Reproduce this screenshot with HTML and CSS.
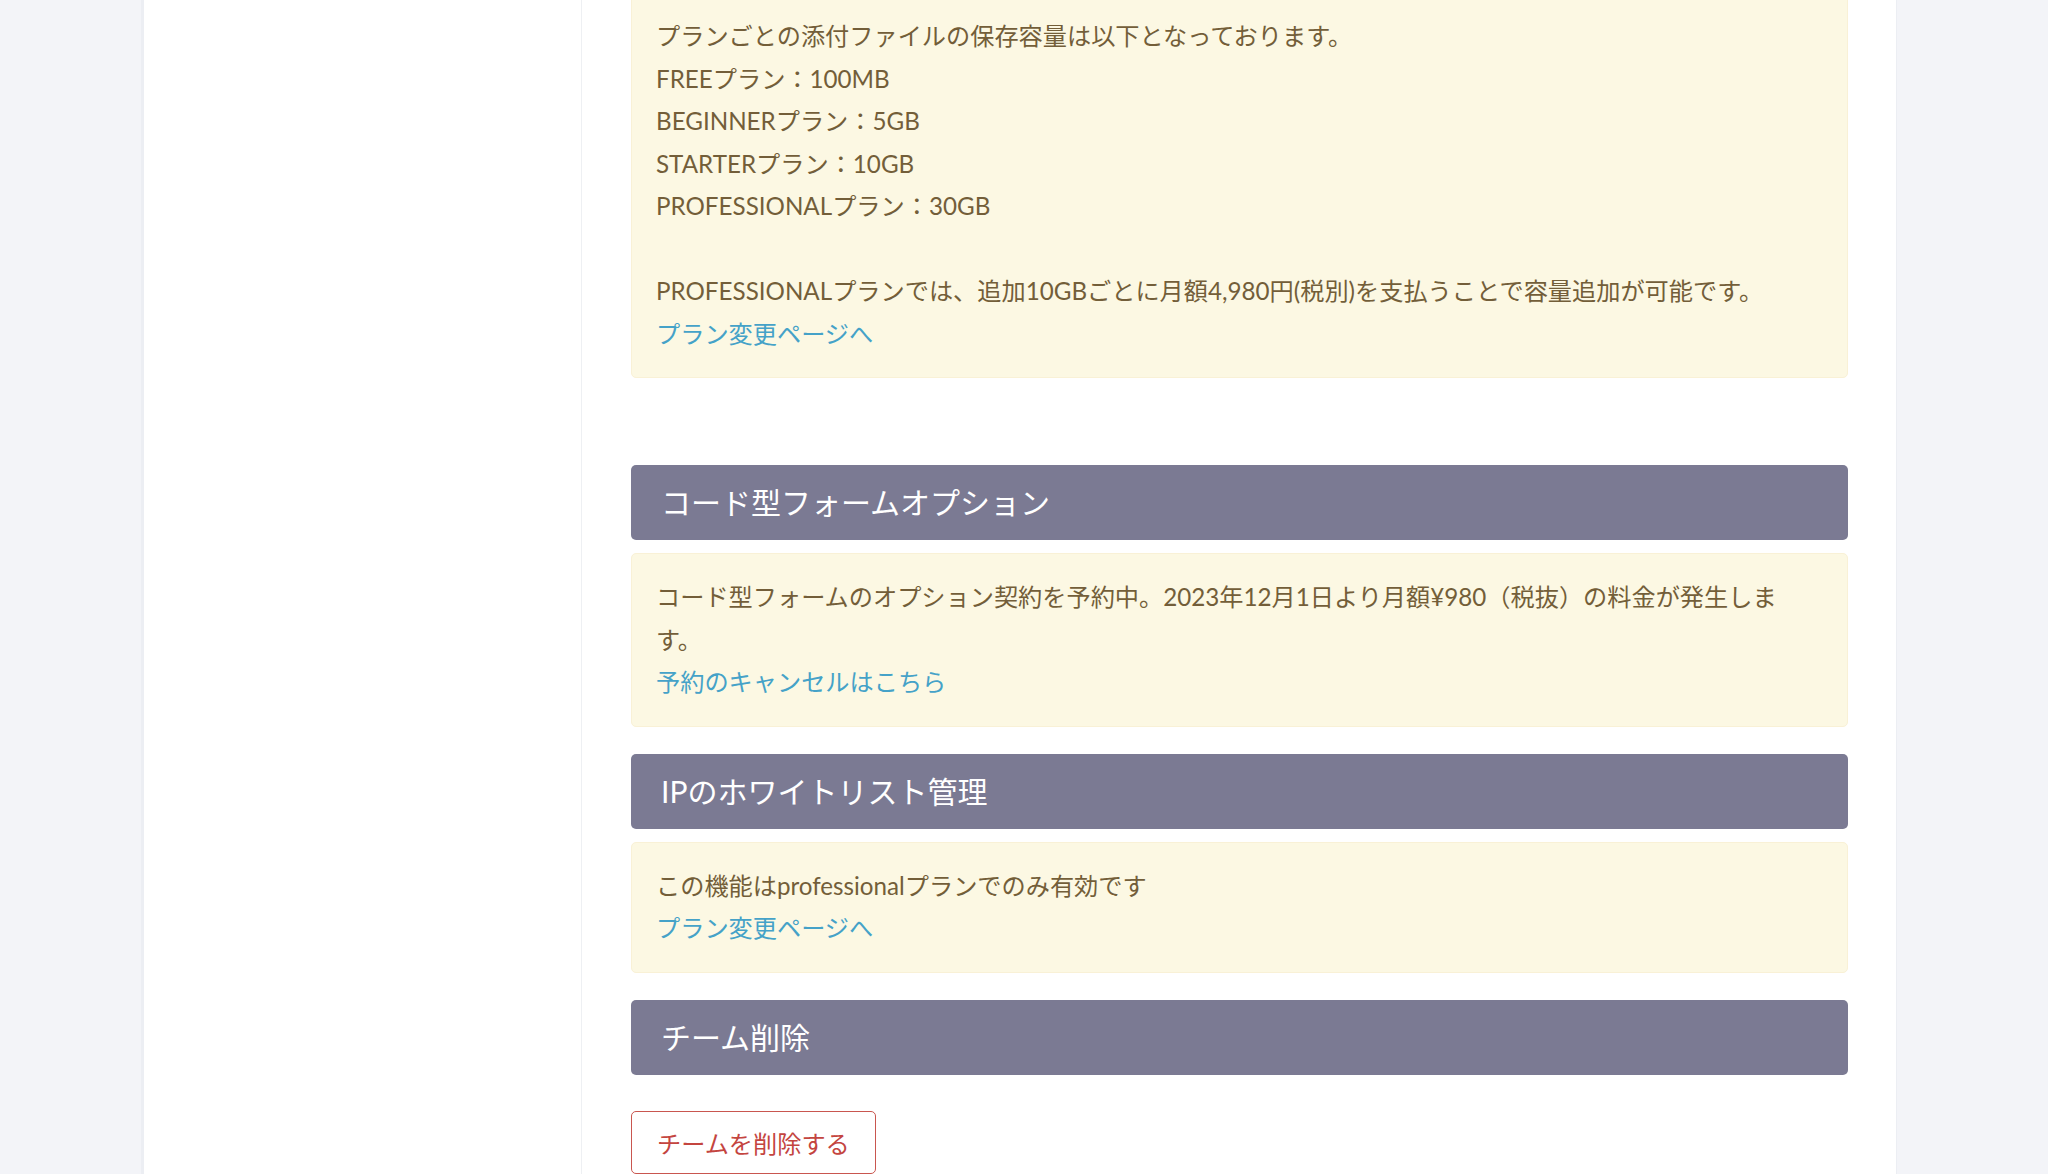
FILE: index.html
```html
<!DOCTYPE html>
<html lang="ja">
<head>
<meta charset="utf-8">
<title>チーム設定</title>
<link rel="stylesheet" href="styles.css">
</head>
<body>
<div class="page">
  <div class="gutter"></div>
  <div class="shell">
    <aside class="sidebar"></aside>
    <main class="main">
      <section class="section section-first">
        <div class="alert alert-cut">
          <p>プランごとの添付ファイルの保存容量は以下となっております。</p>
          <p>FREEプラン：100MB</p>
          <p>BEGINNERプラン：5GB</p>
          <p>STARTERプラン：10GB</p>
          <p>PROFESSIONALプラン：30GB</p>
          <p class="blank">&nbsp;</p>
          <p>PROFESSIONALプランでは、追加10GBごとに月額4,980円(税別)を支払うことで容量追加が可能です。</p>
          <p><a class="link" href="#">プラン変更ページへ</a></p>
        </div>
      </section>

      <section class="section">
        <h2 class="section-title">コード型フォームオプション</h2>
        <div class="alert">
          <p>コード型フォームのオプション契約を予約中。2023年12月1日より月額¥980（税抜）の料金が発生しま<br>す。</p>
          <p><a class="link" href="#">予約のキャンセルはこちら</a></p>
        </div>
      </section>

      <section class="section">
        <h2 class="section-title">IPのホワイトリスト管理</h2>
        <div class="alert">
          <p>この機能はprofessionalプランでのみ有効です</p>
          <p><a class="link" href="#">プラン変更ページへ</a></p>
        </div>
      </section>

      <section class="section">
        <h2 class="section-title title-before-button">チーム削除</h2>
        <button class="btn-danger" type="button">チームを削除する</button>
      </section>
    </main>
  </div>
  <div class="gutter-right"></div>
</div>
</body>
</html>
```

FILE: styles.css
```css
* {
  box-sizing: border-box;
}

html, body {
  margin: 0;
  padding: 0;
  height: 100%;
  overflow: hidden;
}

body {
  background: #f3f4f8;
  font-family: Lato, "Noto Sans CJK JP", "Noto Sans", sans-serif;
  color: #735e39;
}

.page {
  display: flex;
  height: 1174px;
}

.gutter {
  width: 141px;
  flex: none;
  border-right: 3px solid #eceef3;
  box-sizing: content-box;
}

.gutter-right {
  flex: 1;
  border-left: 1px solid #eceef3;
}

.shell {
  display: flex;
  width: 1752px;
  flex: none;
  background: #ffffff;
}

.sidebar {
  width: 438px;
  flex: none;
  border-right: 1px solid #eef0f3;
}

.main {
  flex: 1;
  padding: 0 48px 0 49px;
}

.section {
  margin-bottom: 27px;
}

.section-first {
  margin-bottom: 87px;
}

.alert {
  background: #fcf8e3;
  border: 1px solid #f9f1d6;
  border-radius: 5px;
  padding: 22px 24px;
  font-size: 24.2px;
  line-height: 42.5px;
  color: #735e39;
}

.alert-cut {
  margin-top: -8px;
}

.alert p {
  margin: 0;
}

.link {
  color: #45a2c8;
  text-decoration: none;
}

.section-title {
  margin: 0 0 13px;
  height: 75px;
  display: flex;
  align-items: center;
  padding-left: 30px;
  padding-bottom: 3px;
  background: #7b7a93;
  color: #ffffff;
  border-radius: 5px;
  font-size: 30px;
  font-weight: normal;
}

.title-before-button {
  margin-bottom: 36px;
}

.btn-danger {
  font-family: Lato, "Noto Sans CJK JP", "Noto Sans", sans-serif;
  font-size: 24.2px;
  height: 63px;
  padding: 0 25px;
  background: #ffffff;
  color: #c4453f;
  border: 1.5px solid #c9564f;
  border-radius: 5px;
  cursor: pointer;
}
```
